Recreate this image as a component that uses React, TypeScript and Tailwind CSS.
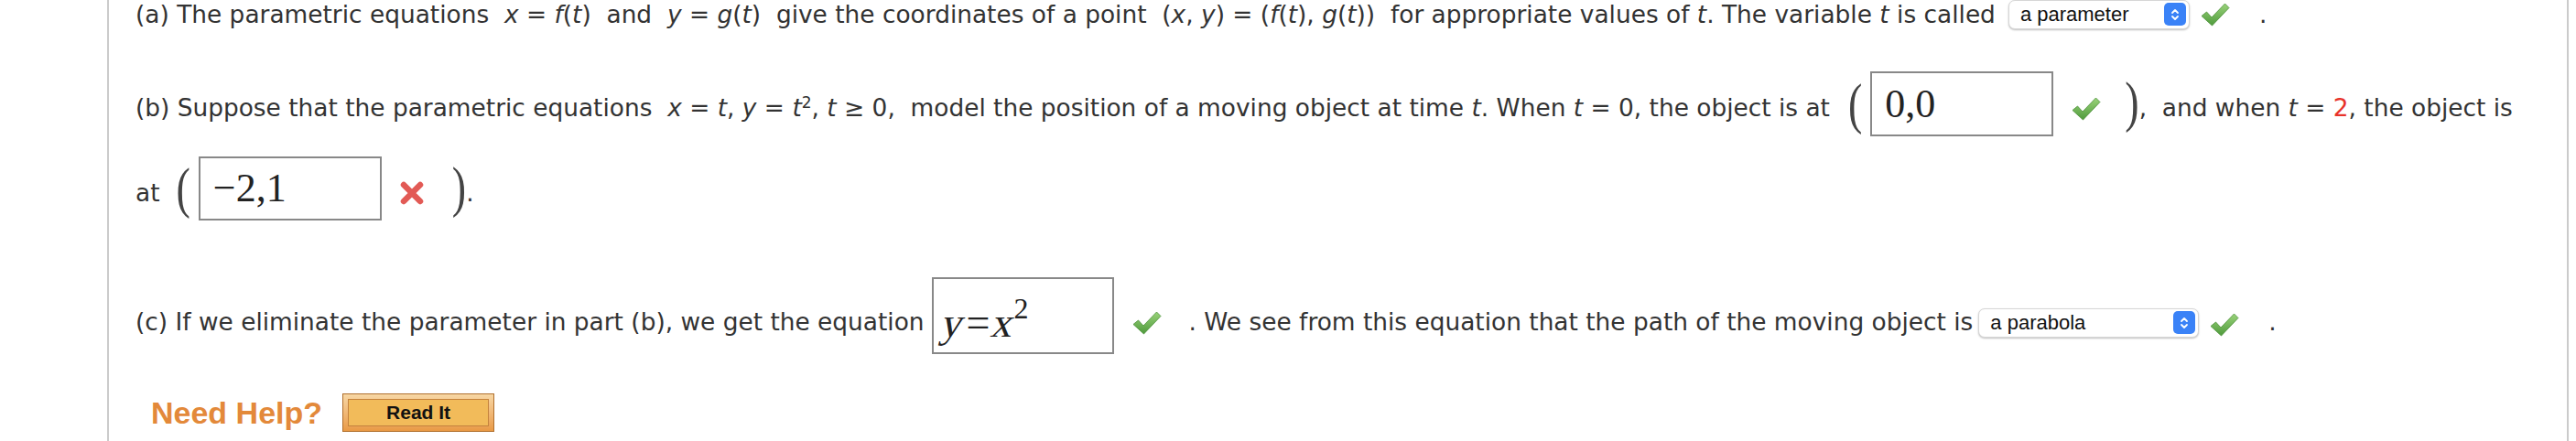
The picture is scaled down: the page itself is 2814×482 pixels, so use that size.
import React from 'react';

const Check = () => (
  <svg width="32" height="26" viewBox="0 0 32 26" className="shrink-0">
    <defs>
      <linearGradient id="chk" x1="0" y1="0" x2="0" y2="1">
        <stop offset="0" stopColor="#9ad37a" />
        <stop offset="1" stopColor="#4f9a3c" />
      </linearGradient>
    </defs>
    <path d="M1 14.5 L6.5 10 L12 16 L26.5 1 L31 5.5 L12.5 25 Z" fill="url(#chk)" stroke="#4a8f37" strokeWidth="0.8" strokeLinejoin="round" />
  </svg>
);

const Cross = () => (
  <svg width="28" height="26" viewBox="0 0 28 26" className="shrink-0">
    <path d="M5 4 L23 22 M23 4 L5 22" stroke="#e25a55" strokeWidth="6.5" strokeLinecap="round" />
  </svg>
);

const Paren = ({ ch }: { ch: string }) => (
  <span className="font-['Liberation_Serif',serif] text-[46px] leading-none text-[#444] scale-y-[1.35] inline-block font-light">
    {ch}
  </span>
);

const Select = ({ label, w }: { label: string; w: string }) => (
  <div className={`${w} h-[32px] shrink-0 rounded-[7px] border border-[#d6d6d6] bg-white shadow-[0_1px_2px_rgba(0,0,0,0.25)] flex items-center justify-between pl-[12px] pr-[3px]`}>
    <span className="font-['Liberation_Sans',Arial,sans-serif] text-[22px] text-[#111]">{label}</span>
    <span className="w-[24px] h-[25px] rounded-[5px] bg-[#3a82f7] flex items-center justify-center">
      <svg width="12" height="18" viewBox="0 0 12 18">
        <path d="M3 7 L6 4 L9 7 M3 11 L6 14 L9 11" stroke="white" strokeWidth="1.8" fill="none" strokeLinecap="round" strokeLinejoin="round" />
      </svg>
    </span>
  </div>
);

const MathBox = ({ children, h }: { children: React.ReactNode; h: string }) => (
  <div className={`w-[200px] ${h} shrink-0 border-2 border-[#888] bg-white flex items-center pl-[14px] font-['Liberation_Serif',serif] text-[44px] text-[#222]`}>
    {children}
  </div>
);

// MathQuill-like italic variable: upright serif glyph slanted
const Var = ({ ch }: { ch: string }) => (
  <span className="inline-block -skew-x-[14deg] not-italic">{ch}</span>
);

export default function App() {
  return (
    <div className="flex h-[482px] w-[2814px] bg-white font-['DejaVu_Sans',Verdana,sans-serif] text-[26.4px] text-[#333]">
      <div className="w-[117px] shrink-0" />
      <div className="w-[2689px] shrink-0 border-x-2 border-[#cbcbcb] pl-[29px]">
        {/* part a */}
        <div className="flex h-[31px] items-center whitespace-pre">
          <span>
            (a) The parametric equations  <i>x</i> = <i>f</i>(<i>t</i>)  and  <i>y</i> = <i>g</i>(<i>t</i>)  give the coordinates of a point  (<i>x</i>, <i>y</i>) = (<i>f</i>(<i>t</i>), <i>g</i>(<i>t</i>))  for appropriate values of <i>t</i>. The variable <i>t</i> is called
          </span>
          <div className="ml-[14px]">
            <Select label="a parameter" w="w-[198px]" />
          </div>
          <div className="ml-[12px]"><Check /></div>
          <span className="ml-[32px]">.</span>
        </div>

        {/* part b */}
        <div className="mt-[47px] flex h-[71px] items-center whitespace-pre">
          <span className="mt-[8px]">
            (b) Suppose that the parametric equations  <i>x</i> = <i>t</i>, <i>y</i> = <i>t</i><sup className="text-[17px]">2</sup>, <i>t</i> ≥ 0,  model the position of a moving object at time <i>t</i>. When <i>t</i> = 0, the object is at
          </span>
          <div className="ml-[20px] flex items-center">
            <Paren ch="(" />
            <div className="ml-[9px]">
              <MathBox h="h-[71px]">0,0</MathBox>
            </div>
            <div className="ml-[20px] mt-[10px]"><Check /></div>
            <div className="ml-[26px]"><Paren ch=")" /></div>
          </div>
          <span className="mt-[8px]">,  and when <i>t</i> = <span className="text-[#e8332a]">2</span>, the object is</span>
        </div>

        <div className="mt-[22px] flex h-[70px] items-center whitespace-pre">
          <span className="mt-[10px]">at</span>
          <div className="ml-[18px] flex items-center">
            <Paren ch="(" />
            <div className="ml-[9px]">
              <MathBox h="h-[70px]">−2,1</MathBox>
            </div>
            <div className="ml-[19px] mt-[10px]"><Cross /></div>
            <div className="ml-[30px]"><Paren ch=")" /></div>
          </div>
          <span className="mt-[10px]">.</span>
        </div>

        {/* part c */}
        <div className="mt-[62px] flex h-[84px] items-center whitespace-pre">
          <span className="mt-[14px]">(c) If we eliminate the parameter in part (b), we get the equation</span>
          <div className="ml-[8px]">
            <div className="w-[199px] h-[84px] border-2 border-[#888] bg-white pl-[10px] pt-[16px] font-['Liberation_Serif',serif] text-[46px] leading-none text-[#222]">
              <Var ch="y" />
              <span className="mx-[3px]">=</span>
              <Var ch="x" />
              <span className="text-[32px] align-[20px]">2</span>
            </div>
          </div>
          <div className="ml-[20px] mt-[16px]"><Check /></div>
          <span className="ml-[30px] mt-[14px]">. We see from this equation that the path of the moving object is</span>
          <div className="ml-[6px] mt-[15px]">
            <Select label="a parabola" w="w-[241px]" />
          </div>
          <div className="ml-[12px] mt-[20px]"><Check /></div>
          <span className="ml-[32px] mt-[14px]">.</span>
        </div>

        {/* help */}
        <div className="mt-[43px] flex h-[42px] items-center pl-[17px]">
          <span className="font-['Liberation_Sans',Arial,sans-serif] font-bold text-[34px] text-[#e3893a]">Need Help?</span>
          <button className="ml-[22px] w-[166px] h-[42px] border border-[#b06f2c] bg-gradient-to-b from-[#f7d7a4] to-[#e99a45] p-[5px]">
            <div className="h-full w-full border border-[#c4823d] bg-[#f2bb5a] flex items-center justify-center font-['Liberation_Sans',Arial,sans-serif] font-bold text-[21px] text-[#111]">
              Read It
            </div>
          </button>
        </div>
      </div>
    </div>
  );
}
